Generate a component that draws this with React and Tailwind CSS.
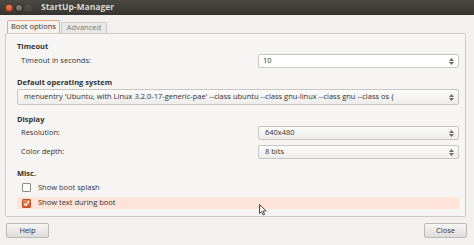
const font = { fontFamily: '"Open Sans", "Noto Sans", sans-serif' };

function Updown() {
  return (
    <span className="flex flex-col items-center justify-center gap-[1px] text-[#6b6a66]">
      <svg width="5" height="3" viewBox="0 0 5 3"><path d="M0 3 L2.5 0 L5 3 Z" fill="currentColor" /></svg>
      <svg width="5" height="3" viewBox="0 0 5 3"><path d="M0 0 L2.5 3 L5 0 Z" fill="currentColor" /></svg>
    </span>
  );
}

function Combo({ value, className = "" }) {
  return (
    <div className={`flex items-center justify-between rounded-[2px] border border-[#c9c6c1] bg-gradient-to-b from-[#fbfbfa] to-[#eeedeb] pl-[6px] pr-[4px] ${className}`}>
      <span className="truncate text-[7.5px] text-[#333230]">{value}</span>
      <Updown />
    </div>
  );
}

function Check({ checked }) {
  if (checked) {
    return (
      <span className="flex h-[9px] w-[9px] items-center justify-center rounded-[1px] border border-[#b8512a] bg-gradient-to-b from-[#ef8658] to-[#d9582c]">
        <svg width="7" height="7" viewBox="0 0 7 7">
          <path d="M1 3.6 L2.8 5.4 L6 1.2" stroke="#fff" strokeWidth="1.3" fill="none" />
        </svg>
      </span>
    );
  }
  return <span className="h-[9px] w-[9px] rounded-[1px] border border-[#8f8d88] bg-white" />;
}

function Heading({ children, className = "" }) {
  return <div className={`pl-[11px] text-[7.5px] font-bold text-[#333230] ${className}`}>{children}</div>;
}

export default function App() {
  return (
    <div className="relative flex h-[245px] w-[474px] flex-col overflow-hidden bg-[#f2f1f0]" style={font}>
      <div className="flex h-[15px] items-center bg-gradient-to-b from-[#4a4944] to-[#35342f] pl-[5px]">
        <span className="h-[8px] w-[8px] rounded-full border border-[#8d3b1c] bg-gradient-to-b from-[#f4865a] to-[#df4a16]" />
        <span className="ml-[2px] h-[8px] w-[8px] rounded-full border border-[#2c2b28] bg-gradient-to-b from-[#8c8a84] to-[#66655f]" />
        <span className="ml-[1px] h-[8px] w-[8px] rounded-full border border-[#4a4944] bg-gradient-to-b from-[#55544f] to-[#45443f]" />
        <span className="ml-[9px] text-[8.5px] font-bold text-[#dcd8d0]">StartUp-Manager</span>
      </div>

      <div className="flex h-[18px] items-end pl-[7px]">
        <div className="flex h-[13px] items-center rounded-t-[2px] border border-b-0 border-[#e7a788] bg-[#f7f1ee] px-[3px] text-[7.5px] text-[#333230]">
          Boot options
        </div>
        <div className="ml-[1px] flex h-[11px] items-center rounded-t-[2px] border border-b-0 border-[#cfccc7] bg-[#e9e8e6] px-[5px] text-[7.5px] text-[#7a7873]">
          Advanced
        </div>
      </div>

      <div className="ml-[5px] flex h-[184px] w-[461px] flex-col rounded-[2px] border border-[#cfccc7] bg-[#f6f5f4] pr-[6px]">
        <Heading className="mt-[6px] h-[12px] leading-[12px]">Timeout</Heading>
        <div className="mt-[2px] flex h-[14px] items-center">
          <span className="w-[252px] pl-[15px] text-[7.5px] text-[#333230]">Timeout in seconds:</span>
          <div className="flex h-[14px] flex-1 items-center justify-between rounded-[2px] border border-[#c9c6c1] bg-white pl-[4px] pr-[4px]">
            <span className="text-[7.5px] text-[#333230]">10</span>
            <Updown />
          </div>
        </div>
        <Heading className="mt-[8px] h-[12px] leading-[12px]">Default operating system</Heading>
        <Combo
          className="ml-[11px] mt-[1px] h-[16px]"
          value="menuentry 'Ubuntu, with Linux 3.2.0-17-generic-pae' --class ubuntu --class gnu-linux --class gnu --class os {"
        />
        <Heading className="mt-[8px] h-[12px] leading-[12px]">Display</Heading>
        <div className="mt-[1px] flex h-[14px] items-center">
          <span className="w-[252px] pl-[15px] text-[7.5px] text-[#333230]">Resolution:</span>
          <Combo className="h-[14px] flex-1" value="640x480" />
        </div>
        <div className="mt-[5px] flex h-[14px] items-center">
          <span className="w-[252px] pl-[15px] text-[7.5px] text-[#333230]">Color depth:</span>
          <Combo className="h-[14px] flex-1" value="8 bits" />
        </div>
        <Heading className="mt-[8px] h-[12px] leading-[12px]">Misc.</Heading>
        <div className="mt-[3px] flex h-[11px] items-center gap-[7px] pl-[16px]">
          <Check />
          <span className="text-[7.5px] text-[#333230]">Show boot splash</span>
        </div>
        <div className="ml-[11px] mt-[4px] flex h-[12px] items-center gap-[7px] bg-[#fde3d8] pl-[5px]">
          <Check checked />
          <span className="text-[7.5px] text-[#333230]">Show text during boot</span>
        </div>
      </div>

      <div className="mt-[6px] flex justify-between pl-[6px] pr-[7px]">
        <button className="flex h-[15px] w-[43px] items-center justify-center rounded-[2px] border border-[#bcb9b4] bg-gradient-to-b from-[#f6f6f5] to-[#dedcd9] text-[7.5px] text-[#333230]">
          Help
        </button>
        <button className="flex h-[15px] w-[43px] items-center justify-center rounded-[2px] border border-[#bcb9b4] bg-gradient-to-b from-[#f6f6f5] to-[#dedcd9] text-[7.5px] text-[#333230]">
          Close
        </button>
      </div>

      <svg className="absolute left-[259px] top-[204px]" width="8" height="12" viewBox="0 0 8 12">
        <path d="M0.5 0.5 L0.5 9.5 L2.7 7.5 L4.3 11 L5.6 10.4 L4.1 7 L7.2 7 Z" fill="#fff" stroke="#222" strokeWidth="0.8" />
      </svg>
    </div>
  );
}
